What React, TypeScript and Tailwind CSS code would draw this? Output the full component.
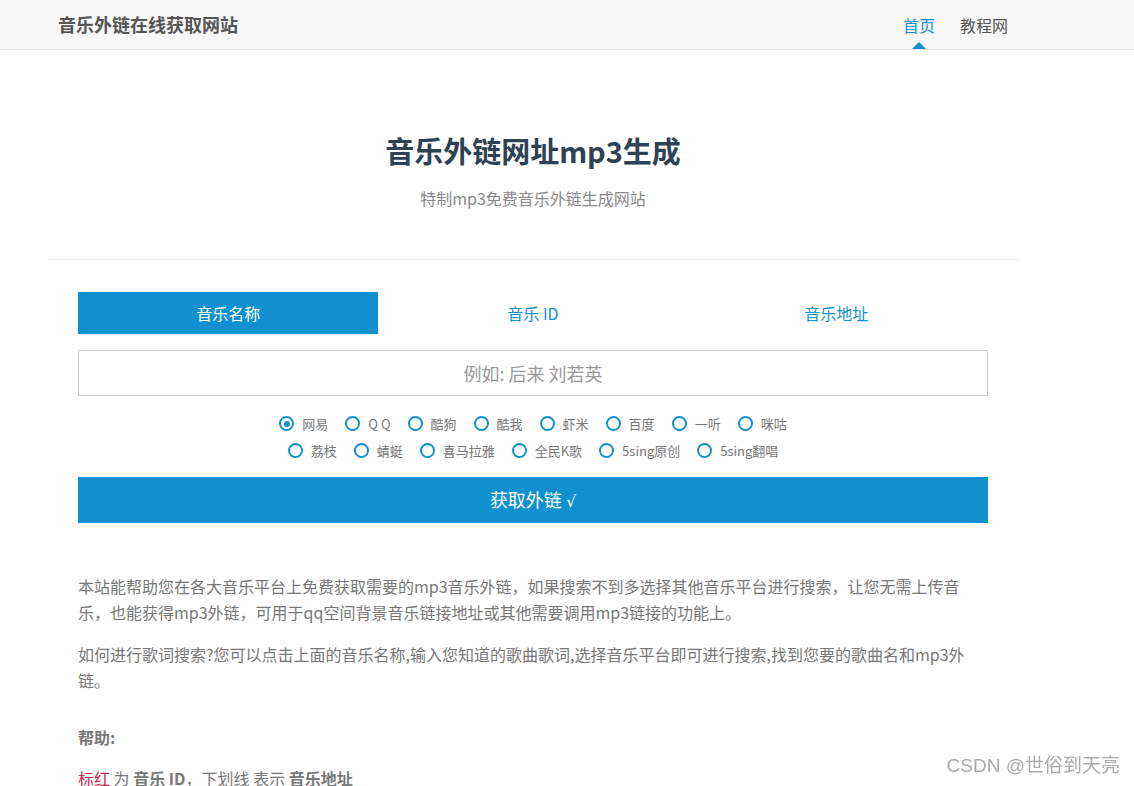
const row1 = ['网易', 'Q Q', '酷狗', '酷我', '虾米', '百度', '一听', '咪咕']
const row2 = ['荔枝', '蜻蜓', '喜马拉雅', '全民K歌', '5sing原创', '5sing翻唱']

function Radio({ label, checked }: { label: string; checked?: boolean }) {
  return (
    <label className="flex items-center">
      <span className="flex h-[15px] w-[15px] items-center justify-center rounded-full border-2 border-[#1190d0] bg-white">
        {checked && <span className="h-[6px] w-[6px] rounded-full bg-[#1190d0]" />}
      </span>
      <span className="ml-[8px] whitespace-pre text-[13px] text-[#777]">{label}</span>
    </label>
  )
}

export default function App() {
  return (
    <div className="relative min-h-screen bg-white font-['Noto_Sans_CJK_SC',sans-serif]">
      <header className="h-[50px] border-b border-[#e3e3e3] bg-[#f8f8f8]">
        <div className="ml-[48px] flex h-full w-[970px] items-center justify-between px-[10px]">
          <div className="text-[18px] font-bold text-[#555]">音乐外链在线获取网站</div>
          <nav className="flex h-full items-center gap-[25px] text-[16px]">
            <a className="relative flex h-full items-center text-[#1190d0]">
              首页
              <span className="absolute bottom-0 left-1/2 -ml-[7px] h-0 w-0 border-x-[7px] border-b-[7px] border-x-transparent border-b-[#1190d0]" />
            </a>
            <a className="text-[#555]">教程网</a>
          </nav>
        </div>
      </header>

      <main className="ml-[48px] w-[970px]">
        <section className="pt-[83px] text-center">
          <h1 className="text-[29px] font-bold leading-[34px] text-[#2f4255]">音乐外链网址mp3生成</h1>
          <p className="mt-[20px] text-[16px] leading-[22px] text-[#888]">特制mp3免费音乐外链生成网站</p>
        </section>
        <div className="mt-[50px] border-t border-[#eee]" />

        <div className="px-[30px]">
          <div className="mt-[32px] grid h-[42px] grid-cols-3 text-[16px]">
            <button className="mr-[3px] bg-[#1190d0] text-white">音乐名称</button>
            <button className="text-[#1190d0]">音乐 ID</button>
            <button className="text-[#1190d0]">音乐地址</button>
          </div>

          <input
            className="mt-[16px] h-[46px] w-full border border-[#ccc] text-center text-[18px] outline-none placeholder:text-[#999]"
            placeholder="例如: 后来 刘若英"
          />

          <div className="mt-[14px] flex flex-col items-center">
            <div className="flex h-[27px] items-center gap-x-[17px]">
              {row1.map((r, i) => (
                <Radio key={r} label={r} checked={i === 0} />
              ))}
            </div>
            <div className="flex h-[27px] items-center gap-x-[17px]">
              {row2.map(r => (
                <Radio key={r} label={r} />
              ))}
            </div>
          </div>

          <button className="mt-[13px] h-[46px] w-full bg-[#1190d0] text-[18px] text-white">
            获取外链 <span className="font-['DejaVu_Sans',sans-serif] text-[16px]">√</span>
          </button>

          <div className="mt-[50px] text-[16px] leading-[26px] text-[#777]">
            <p>
              本站能帮助您在各大音乐平台上免费获取需要的mp3音乐外链，如果搜索不到多选择其他音乐平台进行搜索，让您无需上传音乐，也能获得mp3外链，可用于qq空间背景音乐链接地址或其他需要调用mp3链接的功能上。
            </p>
            <p className="mt-[16px]">
              如何进行歌词搜索?您可以点击上面的音乐名称,输入您知道的歌曲歌词,选择音乐平台即可进行搜索,找到您要的歌曲名和mp3外链。
            </p>
            <p className="mt-[31px] font-bold">帮助:</p>
            <p className="mt-[15px]">
              <span className="text-[#c7254e]">标红</span> 为 <b>音乐 ID</b>，
              <span className="underline underline-offset-[1px]">下划线</span> 表示 <b>音乐地址</b>
            </p>
          </div>
        </div>
      </main>

      <div className="pointer-events-none fixed bottom-[6px] right-[14px] font-['Liberation_Sans','Noto_Sans_CJK_SC',sans-serif] text-[19px] text-[#aaa] [text-shadow:0_0_1px_#fff]">
        CSDN @世俗到天亮
      </div>
    </div>
  )
}
